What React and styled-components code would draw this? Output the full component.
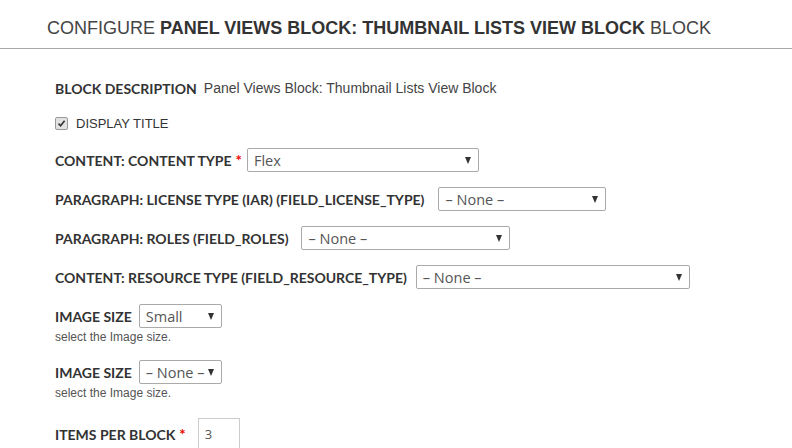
import React from 'react';
import styled, { createGlobalStyle } from 'styled-components';

const GlobalStyle = createGlobalStyle`
  html, body {
    margin: 0;
    padding: 0;
    background: #fff;
  }
  body {
    font-family: 'Liberation Sans', Arial, sans-serif;
    color: #333;
  }
`;

const Page = styled.div`
  width: 792px;
  height: 448px;
  overflow: hidden;
`;

const Header = styled.h1`
  margin: 0;
  padding: 18px 0 0 47px;
  height: 30px;
  border-bottom: 1px solid #aaa;
  font-family: 'Liberation Sans', Arial, sans-serif;
  font-size: 18px;
  font-weight: normal;
  line-height: 21px;
  color: #444;
  white-space: nowrap;

  strong {
    font-weight: bold;
    color: #333;
  }
`;

const Form = styled.div`
  padding: 29px 0 0 55px;
  display: flex;
  flex-direction: column;
`;

const Row = styled.div`
  display: flex;
  align-items: center;
  gap: ${props => props.gap ?? 8}px;
  height: ${props => props.h ?? 24}px;
  margin-bottom: ${props => props.mb ?? 15}px;
`;

const Field = styled.div`
  display: flex;
  flex-direction: column;
  margin-bottom: ${props => props.mb ?? 15}px;
`;

const Label = styled.label`
  font-family: Lato, 'Open Sans', sans-serif;
  font-weight: bold;
  font-size: 14px;
  color: #333;
  white-space: nowrap;
`;

const Required = styled.span`
  color: #e00;
  margin-left: 4px;
  font-size: 15px;
`;

const Value = styled.span`
  font-family: 'Liberation Sans', Arial, sans-serif;
  font-size: 14px;
  color: #444;
`;

const CheckLabel = styled.span`
  font-family: 'Liberation Sans', Arial, sans-serif;
  font-size: 13px;
  color: #333;
`;

const Box = styled.span`
  width: 11px;
  height: 11px;
  border: 1px solid #999;
  border-radius: 2px;
  background: #e2e2e2;
  display: flex;
  align-items: center;
  justify-content: center;
`;

const Select = styled.div`
  box-sizing: border-box;
  width: ${props => props.w}px;
  height: 24px;
  border: 1px solid #aaa;
  border-radius: 2px;
  padding: 0 7px 0 6px;
  display: flex;
  align-items: center;
  justify-content: space-between;
  font-family: 'Open Sans', sans-serif;
  font-size: 14.5px;
  color: #555;
  background: #fff;
`;

const Arrow = styled.span`
  width: 0;
  height: 0;
  border-left: 3.5px solid transparent;
  border-right: 3.5px solid transparent;
  border-top: 7px solid #333;
`;

const Help = styled.div`
  font-family: 'Liberation Sans', Arial, sans-serif;
  font-size: 12px;
  line-height: 14px;
  color: #555;
  margin-top: 2px;
`;

const TextInput = styled.div`
  box-sizing: border-box;
  width: 42px;
  height: 32px;
  border: 1px solid #ccc;
  padding: 0 6px;
  display: flex;
  align-items: center;
  font-family: 'Open Sans', sans-serif;
  font-size: 13px;
  color: #555;
`;

const DropDown = ({ w, value }) => (
  <Select w={w}>
    <span>{value}</span>
    <Arrow />
  </Select>
);

const App = () => (
  <Page>
    <GlobalStyle />
    <Header>
      CONFIGURE <strong>PANEL VIEWS BLOCK: THUMBNAIL LISTS VIEW BLOCK</strong> BLOCK
    </Header>
    <Form>
      <Row gap={7} h={20} mb={18}>
        <Label>BLOCK DESCRIPTION</Label>
        <Value>Panel Views Block: Thumbnail Lists View Block</Value>
      </Row>
      <Row gap={8} h={14} mb={18}>
        <Box>
          <svg width="9" height="9" viewBox="0 0 9 9">
            <path d="M1.5 4.6 L3.6 6.8 L7.6 1.8" fill="none" stroke="#333" strokeWidth="1.6" />
          </svg>
        </Box>
        <CheckLabel>DISPLAY TITLE</CheckLabel>
      </Row>
      <Row gap={5}>
        <Label>
          CONTENT: CONTENT TYPE<Required>*</Required>
        </Label>
        <DropDown w={232} value="Flex" />
      </Row>
      <Row gap={14}>
        <Label>PARAGRAPH: LICENSE TYPE (IAR) (FIELD_LICENSE_TYPE)</Label>
        <DropDown w={168} value="– None –" />
      </Row>
      <Row gap={13}>
        <Label>PARAGRAPH: ROLES (FIELD_ROLES)</Label>
        <DropDown w={209} value="– None –" />
      </Row>
      <Row gap={9}>
        <Label>CONTENT: RESOURCE TYPE (FIELD_RESOURCE_TYPE)</Label>
        <DropDown w={274} value="– None –" />
      </Row>
      <Field mb={16}>
        <Row gap={7} mb={0}>
          <Label>IMAGE SIZE</Label>
          <DropDown w={83} value="Small" />
        </Row>
        <Help>select the Image size.</Help>
      </Field>
      <Field mb={18}>
        <Row gap={7} mb={0}>
          <Label>IMAGE SIZE</Label>
          <DropDown w={83} value="– None –" />
        </Row>
        <Help>select the Image size.</Help>
      </Field>
      <Row gap={12} h={32}>
        <Label>
          ITEMS PER BLOCK<Required>*</Required>
        </Label>
        <TextInput>3</TextInput>
      </Row>
    </Form>
  </Page>
);

export default App;
